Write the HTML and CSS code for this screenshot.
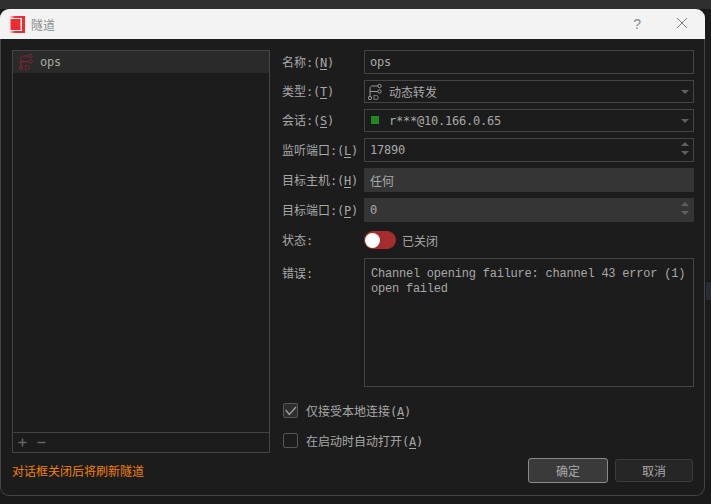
FILE: index.html
```html
<!DOCTYPE html>
<html lang="zh-CN">
<head>
  <meta charset="UTF-8">
  <title>隧道</title>
  <link rel="stylesheet" href="styles.css">
</head>
<body>

<div class="back-top"></div>
<div class="back-patch"></div>

<div class="dialog">
  <div class="titlebar">
    <svg class="logo" width="16" height="17" viewBox="0 0 16 17">
      <defs>
        <linearGradient id="logofade" x1="0" y1="0" x2="1" y2="0">
          <stop offset="0" stop-color="#f42a30" stop-opacity="0"/>
          <stop offset="0.4" stop-color="#f42a30"/>
        </linearGradient>
      </defs>
      <path d="M0 0H16V17H0V15H13V2H0Z" fill="url(#logofade)"/>
      <path d="M1.500 3H11.500V14H1.500Z" fill="#f42a30"/>
    </svg>
    <span class="title">隧道</span>
    <span class="help">?</span>
    <svg class="close" width="12" height="12" viewBox="0 0 12 12">
      <path d="M1 1L11 11M11 1L1 11" stroke="#808080" stroke-width="1" fill="none"/>
    </svg>
  </div>

  <div class="content">
    <div class="left">
      <div class="list">
        <div class="list-items">
          <div class="item">
            <svg class="tunnel-icon" width="16" height="18" viewBox="0 0 16 18" fill="none" stroke="#8e2138">
              <circle cx="11.500" cy="3" r="1.700"/>
              <circle cx="11.500" cy="8.500" r="1.700"/>
              <circle cx="2" cy="15" r="1.700"/>
              <path d="M9.800 3H4.500C3 3 2 4 2 5.500V13.300M2 8.500H9.800"/>
              <text x="5" y="16.500" font-size="8" fill="#8e2138" stroke="none" font-family="Liberation Sans, sans-serif">D</text>
            </svg>
            <span class="mono">ops</span>
          </div>
        </div>
        <div class="list-tools">
          <svg width="9" height="9" viewBox="0 0 9 9"><path d="M0.500 4.500H8.500M4.500 0.500V8.500" stroke="#666" stroke-width="1.500"/></svg>
          <svg width="9" height="9" viewBox="0 0 9 9"><path d="M0.500 4.500H8.500" stroke="#666" stroke-width="1.500"/></svg>
        </div>
      </div>
      <div class="notice">对话框关闭后将刷新隧道</div>
    </div>

    <div class="right">
      <div class="row">
        <div class="lbl">名称<span class="mono">:(<u>N</u>)</span></div>
        <div class="field"><span class="mono">ops</span></div>
      </div>
      <div class="row">
        <div class="lbl">类型<span class="mono">:(<u>T</u>)</span></div>
        <div class="field combo">
          <svg class="tunnel-icon" width="16" height="18" viewBox="0 0 16 18" fill="none" stroke="#9a9a9a">
            <circle cx="11.500" cy="3" r="1.700"/>
            <circle cx="11.500" cy="8.500" r="1.700"/>
            <circle cx="2" cy="15" r="1.700"/>
            <path d="M9.800 3H4.500C3 3 2 4 2 5.500V13.300M2 8.500H9.800"/>
            <text x="5" y="16.500" font-size="8" fill="#9a9a9a" stroke="none" font-family="Liberation Sans, sans-serif">D</text>
          </svg>
          <span>动态转发</span>
          <i class="arrow-down"></i>
        </div>
      </div>
      <div class="row">
        <div class="lbl">会话<span class="mono">:(<u>S</u>)</span></div>
        <div class="field combo">
          <i class="status"></i>
          <span class="mono">r***@10.166.0.65</span>
          <i class="arrow-down"></i>
        </div>
      </div>
      <div class="row">
        <div class="lbl">监听端口<span class="mono">:(<u>L</u>)</span></div>
        <div class="field spin">
          <span class="mono">17890</span>
          <span class="spin-btns"><i class="arrow-up"></i><i class="arrow-down"></i></span>
        </div>
      </div>
      <div class="row">
        <div class="lbl">目标主机<span class="mono">:(<u>H</u>)</span></div>
        <div class="field off"><span>任何</span></div>
      </div>
      <div class="row">
        <div class="lbl">目标端口<span class="mono">:(<u>P</u>)</span></div>
        <div class="field off spin">
          <span class="mono">0</span>
          <span class="spin-btns"><i class="arrow-up"></i><i class="arrow-down"></i></span>
        </div>
      </div>
      <div class="row row-toggle">
        <div class="lbl">状态<span class="mono">:</span></div>
        <div class="toggle"><i class="knob"></i></div>
        <span class="toggle-text">已关闭</span>
      </div>
      <div class="row row-error">
        <div class="lbl">错误<span class="mono">:</span></div>
        <div class="error-box">Channel opening failure: channel 43 error (1)<br>open failed</div>
      </div>
      <div class="check check-first">
        <span class="box">
          <svg width="13" height="13" viewBox="0 0 13 13"><path d="M1.700 6L5.300 10.500L12 3" stroke="#a0a0a0" stroke-width="1.300" fill="none"/></svg>
        </span>
        <span>仅接受本地连接<span class="mono">(<u>A</u>)</span></span>
      </div>
      <div class="check">
        <span class="box"></span>
        <span>在启动时自动打开<span class="mono">(<u>A</u>)</span></span>
      </div>
      <div class="buttons">
        <div class="btn btn-default">确定</div>
        <div class="btn">取消</div>
      </div>
    </div>
  </div>
</div>

</body>
</html>
```

FILE: styles.css
```css
html, body {
  margin: 0;
  padding: 0;
  height: 504px;
  overflow: hidden;
}
body {
  background: #1a1a1a;
  font-family: "Noto Sans CJK SC", "Noto Sans", sans-serif;
  font-size: 12px;
  color: #a8a8a8;
}
.back-top {
  height: 9px;
  background: #2f2f2f;
}
.back-patch {
  position: absolute;
  left: 706px;
  top: 282px;
  width: 5px;
  height: 18px;
  background: #2a2a33;
}
.mono {
  font-family: "DejaVu Sans Mono", "Liberation Mono", monospace;
  letter-spacing: -0.22px;
}
u {
  text-underline-offset: 2px;
}
.dialog {
  width: 705px;
  height: 487px;
  box-sizing: border-box;
  background: #1c1c1c;
  border-radius: 9px;
  border-right: 1px solid #444;
  border-bottom: 1px solid #444;
  border-left: 1px solid #444;
  display: flex;
  flex-direction: column;
}
.titlebar {
  height: 30px;
  flex: none;
  margin: 0 -1px 0 -1px;
  background: #f3f3f3;
  border-radius: 9px 9px 0 0;
  display: flex;
  align-items: center;
  padding-left: 9px;
  color: #8c8c8c;
}
.logo {
  margin-right: 6px;
}
.title {
  flex: 1;
  font-size: 12px;
}
.help {
  font-family: "Liberation Sans", sans-serif;
  font-size: 14px;
  margin-right: 35px;
  margin-bottom: 1px;
  color: #8c8c8c;
}
.close {
  margin-right: 17px;
  margin-bottom: 2px;
}
.content {
  flex: 1;
  display: flex;
  padding: 11px 10px 10px 11px;
  gap: 12px;
}
.left {
  width: 258px;
  display: flex;
  flex-direction: column;
}
.list {
  height: 403px;
  box-sizing: border-box;
  border: 1px solid #444;
  display: flex;
  flex-direction: column;
}
.list-items {
  flex: 1;
}
.item {
  height: 22px;
  background: #2a2a2a;
  display: flex;
  align-items: center;
  gap: 5px;
  padding-left: 6px;
}
.list-tools {
  height: 20px;
  box-sizing: border-box;
  border-top: 1px solid #444;
  display: flex;
  align-items: center;
  gap: 10px;
  padding-left: 5px;
}
.notice {
  margin-top: 9px;
  color: #f08000;
  line-height: 18px;
}
.right {
  flex: 1;
  display: flex;
  flex-direction: column;
}
.row {
  display: flex;
  align-items: center;
  margin-bottom: 6px;
}
.lbl {
  width: 82px;
  flex: none;
  line-height: 16px;
}
.field {
  flex: 1;
  height: 24px;
  box-sizing: border-box;
  border: 1px solid #444;
  display: flex;
  align-items: center;
  padding: 0 4px 0 5px;
}
.combo {
  height: 23px;
  gap: 5px;
  padding-left: 3px;
}
.field.off {
  background: #353535;
  border-color: #353535;
}
.arrow-down, .arrow-up {
  display: block;
  width: 0;
  height: 0;
  border-left: 4px solid transparent;
  border-right: 4px solid transparent;
}
.arrow-down {
  border-top: 4px solid #5f5f5f;
}
.arrow-up {
  border-bottom: 4px solid #5f5f5f;
}
.combo .arrow-down {
  margin-left: auto;
}
.spin {
  justify-content: space-between;
}
.spin-btns {
  display: flex;
  flex-direction: column;
  gap: 5px;
  margin-bottom: 3px;
}
.status {
  width: 8px;
  height: 8px;
  margin: 0 5px 1px 3px;
  background: #1f8a1f;
}
.row-toggle {
  margin-top: 3px;
  margin-bottom: 9px;
}
.toggle {
  width: 32px;
  height: 18px;
  border-radius: 9px;
  background: #a52d2d;
  display: flex;
  align-items: center;
  padding-left: 1px;
  box-sizing: border-box;
}
.knob {
  width: 15px;
  height: 15px;
  border-radius: 50%;
  background: #fff;
}
.toggle-text {
  margin-left: 6px;
}
.row-error {
  align-items: flex-start;
  margin-bottom: 16px;
}
.row-error .lbl {
  padding-top: 7px;
}
.error-box {
  flex: 1;
  height: 129px;
  box-sizing: border-box;
  border: 1px solid #444;
  padding: 8px 6px;
  font-family: "Liberation Mono", monospace;
  letter-spacing: -0.22px;
  line-height: 15px;
  white-space: nowrap;
}
.check {
  display: flex;
  align-items: center;
  gap: 8px;
  height: 15px;
  margin-left: 1px;
  margin-bottom: 15px;
}
.box {
  width: 15px;
  height: 15px;
  box-sizing: border-box;
  border: 1px solid #555;
  border-radius: 2px;
  display: flex;
  align-items: center;
  justify-content: center;
}
.check-first .box {
  background: #2d2d2d;
}
.buttons {
  display: flex;
  justify-content: flex-end;
  align-items: center;
  gap: 7px;
  margin-right: 1px;
  margin-top: -5px;
}
.btn {
  width: 78px;
  height: 23px;
  box-sizing: border-box;
  background: #262626;
  border: 1px solid #3c3c3c;
  border-radius: 3px;
  display: flex;
  align-items: center;
  justify-content: center;
}
.btn-default {
  width: 80px;
  height: 25px;
  background: #3a3a3a;
  border-color: #8a8a8a;
}
```
